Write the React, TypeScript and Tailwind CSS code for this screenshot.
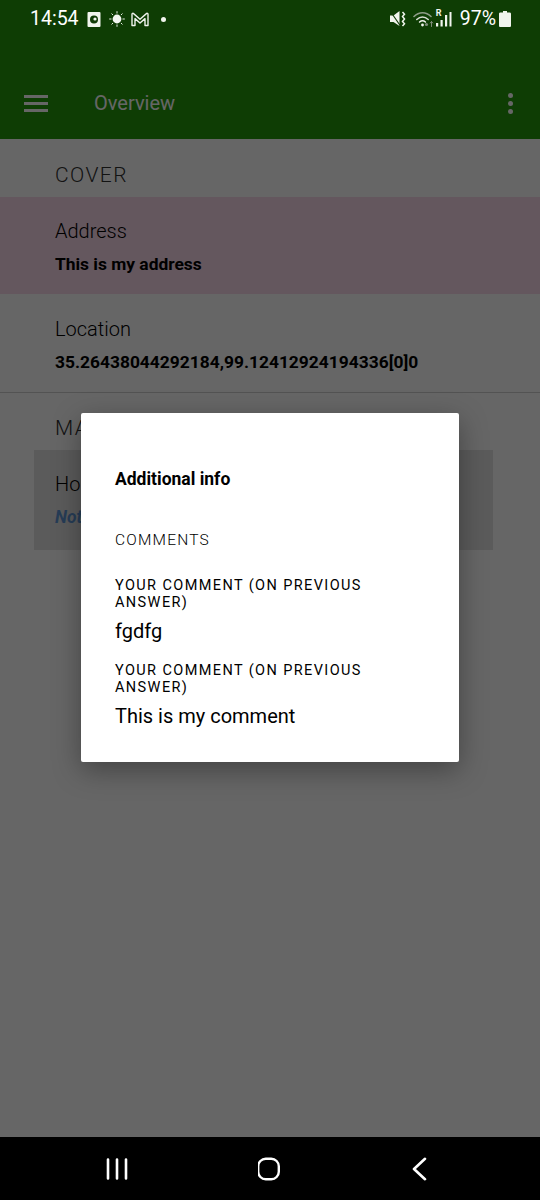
import React from 'react';

const font = { fontFamily: 'Roboto, sans-serif' };

function StatusBar() {
  return (
    <div className="relative z-20 flex h-[38px] items-center justify-between pl-[30px] pr-[29px] text-white">
      <div className="flex items-center">
        <span className="text-[19.5px] leading-none">14:54</span>
        <svg className="ml-[8px]" width="14" height="15" viewBox="0 0 14 15">
          <rect x="0.5" y="0" width="13" height="15" rx="1" fill="#f1f5ee" />
          <circle cx="7" cy="7.5" r="4" fill="#123c08" />
          <circle cx="8" cy="7" r="1.6" fill="#f1f5ee" />
        </svg>
        <svg className="ml-[8px]" width="16" height="16" viewBox="0 0 16 16">
          <circle cx="8" cy="8" r="4.4" fill="#f4f7f2" />
          <g stroke="#e6ece3" strokeWidth="1" strokeLinecap="round">
            <path d="M8 0.6v1.5M8 13.9v1.5M0.6 8h1.5M13.9 8h1.5M2.8 2.8l1 1M12.2 12.2l1 1M2.8 13.2l1-1M12.2 3.8l1-1" />
          </g>
        </svg>
        <svg className="ml-[6px]" width="18" height="15" viewBox="0 0 18 15" fill="none">
          <path d="M1 13.5V2.2c0-.9 1-1.2 1.6-.6L9 7.2l6.4-5.6c.6-.6 1.600-.3 1.600.6v11.3H14V6.600L9 11 4 6.600v6.900z" stroke="#eef2ec" strokeWidth="1.4" strokeLinejoin="round" />
        </svg>
        <span className="ml-[12px] h-[5px] w-[5px] rounded-full bg-[#f1f5ee]" />
      </div>
      <div className="flex items-center">
        <svg width="16" height="16" viewBox="0 0 16 16">
          <path d="M0 4.500h3.500L9.500 0v15L3.500 11H0z" fill="#f1f5ee" />
          <path d="M0.500 0.500l10 14.500" stroke="#123c08" strokeWidth="1.200" />
          <path d="M12.500 1l2 2.200-2 2.400 2 2.400-2 2.400 2 2.400-2 2.200" stroke="#f1f5ee" strokeWidth="1.500" fill="none" />
        </svg>
        <svg className="ml-[7px]" width="21" height="16" viewBox="0 0 21 16" fill="none" strokeLinecap="round">
          <path d="M1 5.500c5-5 12-5 17 0" stroke="#8e9c88" strokeWidth="1.600" />
          <path d="M3.800 8.500c3.400-3.200 8-3.200 11.400 0" stroke="#d5dcd1" strokeWidth="1.600" />
          <path d="M6.600 11c1.800-1.500 4-1.500 5.800 0" stroke="#f1f5ee" strokeWidth="1.600" />
          <circle cx="9.500" cy="14" r="1.400" fill="#f1f5ee" />
          <circle cx="13.500" cy="13.500" r="1.600" fill="#7e8c78" />
          <path d="M18.500 10.500v5M17.300 12l1.200-1.500 1.200 1.500" stroke="#7e8c78" strokeWidth="1" />
        </svg>
        <div className="relative ml-[1px] h-[16px] w-[17px]">
          <span className="absolute left-[1px] top-[-2px] text-[9px] font-bold leading-none text-[#f1f5ee]">R</span>
          <svg width="17" height="16" viewBox="0 0 17 16" fill="#f1f5ee">
            <rect x="1" y="12" width="2.200" height="3.500" />
            <rect x="5.500" y="9" width="2.200" height="6.500" />
            <rect x="10" y="4" width="2.200" height="11.500" />
            <rect x="14.500" y="1" width="2" height="14.500" />
          </svg>
        </div>
        <span className="ml-[8px] text-[19.5px] leading-none">97%</span>
        <svg className="ml-[3px]" width="12" height="16" viewBox="0 0 12 16" fill="#f1f5ee">
          <path d="M4 0h4v1.500h2.700c.7 0 1.300.6 1.300 1.300v11.900c0 .7-.6 1.300-1.300 1.300H1.300C.6 16 0 15.400 0 14.700V2.800c0-.7.6-1.300 1.300-1.300H4z" />
        </svg>
      </div>
    </div>
  );
}

function Field({ label, value, className }: { label: string; value: string; className?: string }) {
  return (
    <div className={`px-[55px] ${className ?? ''}`}>
      <div className="text-[20px] font-light leading-[24px] text-black">{label}</div>
      <div className="mt-[9px] text-[17.4px] font-bold leading-[24px] text-black">{value}</div>
    </div>
  );
}

export default function App() {
  return (
    <div className="relative flex h-[1200px] w-[540px] flex-col overflow-hidden bg-black" style={font}>
      <div className="relative flex h-[1137px] flex-col">
        <div className="h-[139px] bg-[#23990c]">
          <StatusBar />
          <div className="flex h-[101px] items-center justify-between pl-[24px] pr-[27px] pt-[29px]">
            <div className="flex items-center">
              <div className="flex w-[24px] flex-col gap-[4px]">
                <span className="h-[3px] bg-white" />
                <span className="h-[3px] bg-white" />
                <span className="h-[3px] bg-white" />
              </div>
              <span className="ml-[46px] text-[20px] text-white">Overview</span>
            </div>
            <div className="flex flex-col gap-[3px]">
              <span className="h-[5px] w-[5px] rounded-full bg-white" />
              <span className="h-[5px] w-[5px] rounded-full bg-white" />
              <span className="h-[5px] w-[5px] rounded-full bg-white" />
            </div>
          </div>
        </div>
        <div className="flex-1 bg-white">
          <div className="flex h-[58px] items-center px-[55px] pt-[15px] text-[21px] font-light tracking-[1.400px] text-[#303030]">COVER</div>
          <Field className="h-[97px] bg-[#f9d9eb] pt-[22px]" label="Address" value="This is my address" />
          <Field className="h-[99px] border-b border-[#cfcfcf] pt-[23px]" label="Location" value="35.26438044292184,99.12412924194336[0]0" />
          <div className="flex h-[57px] items-center px-[55px] pt-[14px] text-[21px] font-light tracking-[1.400px] text-[#303030]">MAIN</div>
          <div className="ml-[34px] mr-[47px] h-[100px] bg-[#e4e4e4] px-[21px] pt-[22px]">
            <div className="text-[20px] font-light leading-[24px] text-black">House</div>
            <div className="mt-[9px] text-[17.4px] font-bold italic leading-[24px] text-[#5f97d8]">Not answered</div>
          </div>
        </div>

        <div className="absolute inset-0 z-10 flex items-center justify-center bg-black/60 pt-[38px]">
          <div className="h-[349px] w-[378px] rounded-[2px] bg-white px-[34px] pt-[54px] text-black shadow-[0_8px_28px_rgba(0,0,0,0.35)]">
            <div className="text-[17.500px] font-bold leading-[24px]">Additional info</div>
            <div className="mt-[39px] text-[15.500px] font-light leading-[20px] tracking-[1.200px]">COMMENTS</div>
            <div className="mt-[27px] text-[14.500px] leading-[17px] tracking-[1.400px]">YOUR COMMENT (ON PREVIOUS ANSWER)</div>
            <div className="mt-[8px] text-[20px] leading-[24px]">fgdfg</div>
            <div className="mt-[19px] text-[14.500px] leading-[17px] tracking-[1.400px]">YOUR COMMENT (ON PREVIOUS ANSWER)</div>
            <div className="mt-[8px] text-[20px] leading-[24px]">This is my comment</div>
          </div>
        </div>
      </div>

      <div className="flex h-[63px] items-center justify-between bg-black pl-[106px] pr-[112px]">
        <svg width="22" height="22" viewBox="0 0 22 22" stroke="white" strokeWidth="2.600" strokeLinecap="round">
          <path d="M2 1.500v19M11 1.500v19M20 1.500v19" />
        </svg>
        <svg width="24" height="24" viewBox="0 0 24 24" fill="none" stroke="white" strokeWidth="2.400">
          <rect x="0.200" y="1.800" width="20.600" height="20.400" rx="7.500" />
        </svg>
        <svg width="16" height="24" viewBox="0 0 16 24" fill="none" stroke="white" strokeWidth="2.600" strokeLinecap="round" strokeLinejoin="round">
          <path d="M13 1.800L2 12l11 10.200" />
        </svg>
      </div>
    </div>
  );
}
